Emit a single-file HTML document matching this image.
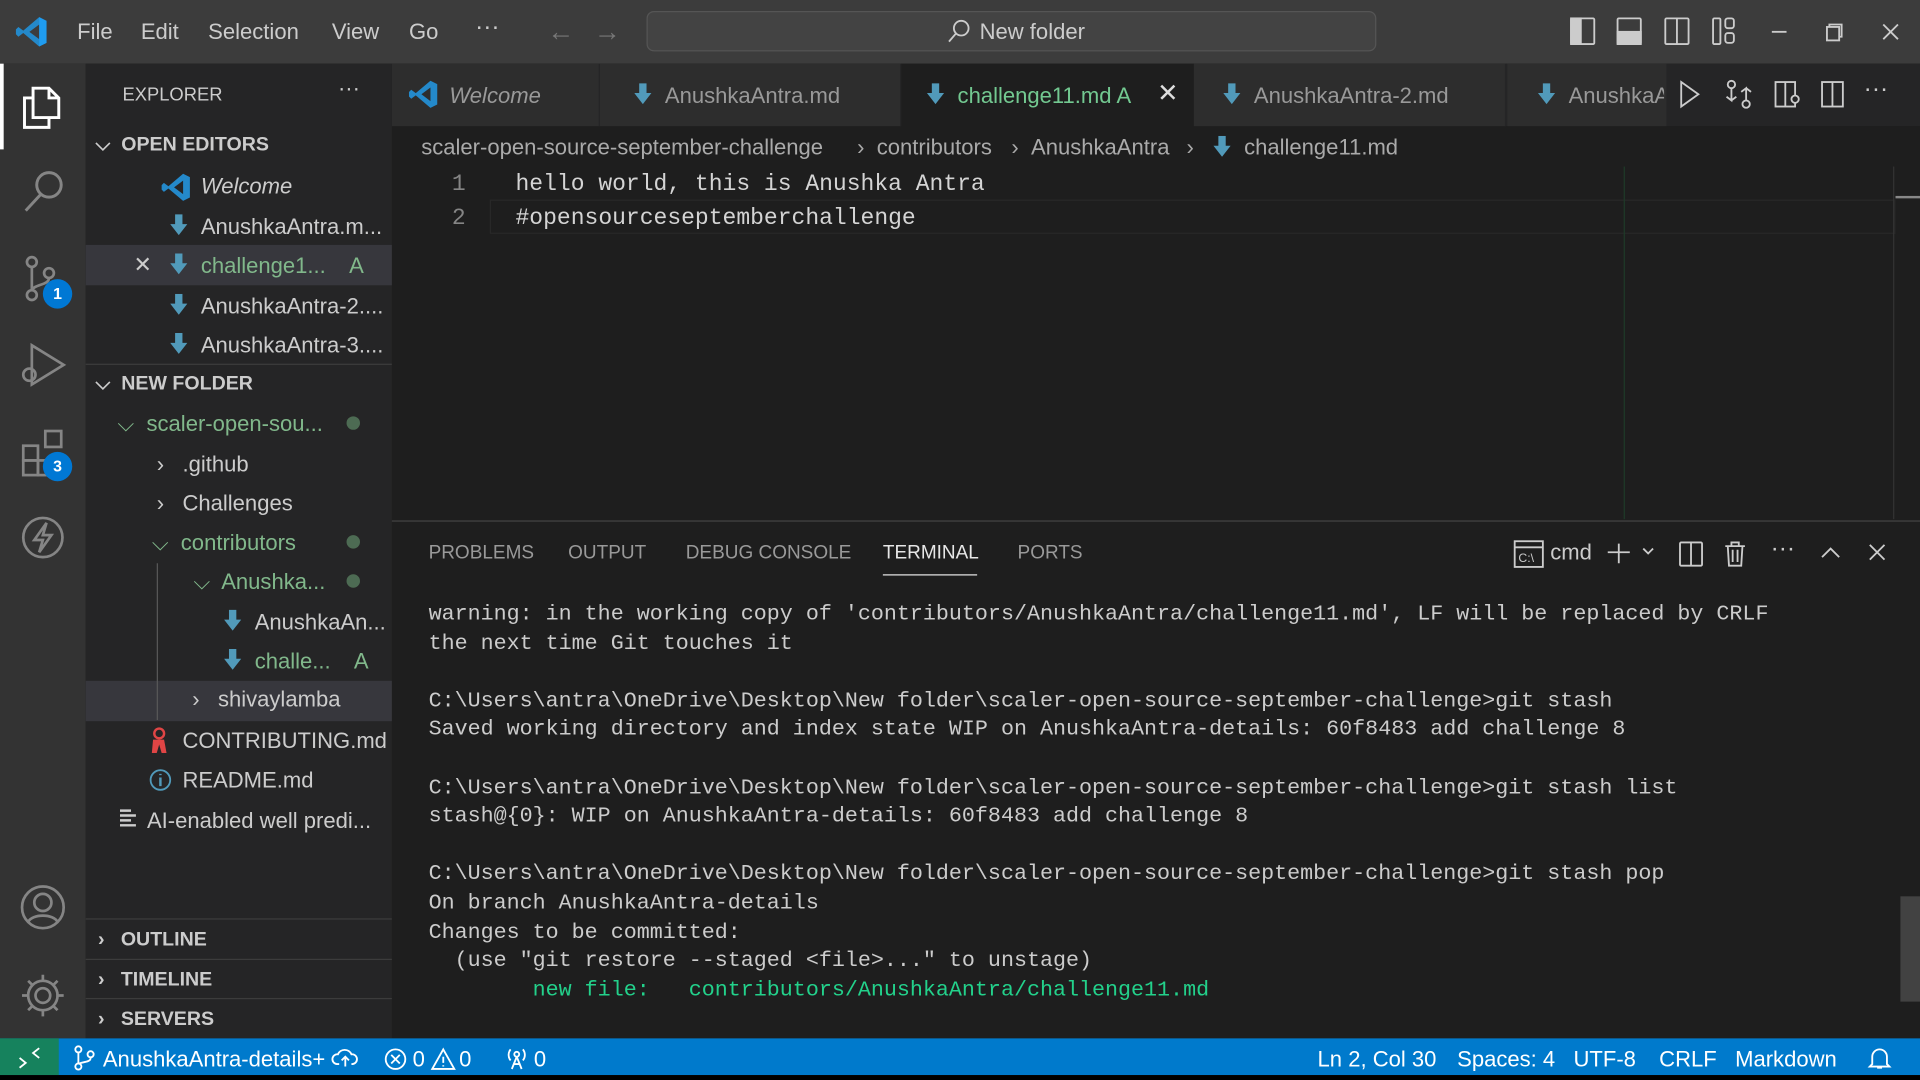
<!DOCTYPE html>
<html><head><meta charset="utf-8">
<style>
*{margin:0;padding:0;box-sizing:border-box}
html,body{width:1920px;height:1080px;overflow:hidden;background:#000}
#s{position:absolute;left:0;top:0;width:1568px;height:882px;transform:scale(1.22449);transform-origin:0 0;background:#1e1e1e;font-family:"Liberation Sans",sans-serif;color:#ccc;font-size:18px}
.a{position:absolute;white-space:nowrap}
.mono{font-family:"Liberation Mono",monospace}
.g{color:#81b88b}
.dot{position:absolute;width:11px;height:11px;border-radius:50%;background:#4d6b53}
svg{overflow:visible}
</style></head><body><div id="s">
<div class="a" style="left:0;top:0;width:1568px;height:52px;background:#3c3c3c"></div>
<svg class="a" style="left:13px;top:13px" width="26" height="26" viewBox="0 0 26 26"><path d="M19 1 L25 4 V22 L19 25 L6 14 L2 17 L0 15 V11 L2 9 L6 12 Z" fill="#2489ca"/><path d="M19 7 V19 L11 13 Z" fill="#3c3c3c"/><path d="M19 1 L25 4 V22 L19 25Z" fill="#1f9cf0"/></svg>
<div class="a" style="left:63px;top:16px">File</div>
<div class="a" style="left:115px;top:16px">Edit</div>
<div class="a" style="left:170px;top:16px">Selection</div>
<div class="a" style="left:271px;top:16px">View</div>
<div class="a" style="left:334px;top:16px">Go</div>
<div class="a" style="left:388px;top:11px;font-size:20px">···</div>
<div class="a" style="left:447px;top:13px;color:#777;font-size:22px">←</div>
<div class="a" style="left:485px;top:13px;color:#777;font-size:22px">→</div>
<div class="a" style="left:528px;top:9px;width:596px;height:33px;border:1px solid #555;border-radius:6px;background:#434343"></div>
<svg class="a" style="left:773px;top:16px" width="20" height="20"><circle cx="12" cy="7" r="6" stroke="#ccc" stroke-width="1.5" fill="none"/><path d="M8 11 L2 18" stroke="#ccc" stroke-width="1.5"/></svg>
<div class="a" style="left:800px;top:16px">New folder</div>
<svg class="a" style="left:1282px;top:14px" width="280" height="24" fill="none" stroke="#ccc" stroke-width="1.5">
<rect x="1" y="1" width="19" height="21" rx="1"/><rect x="1" y="1" width="8" height="21" fill="#ccc"/>
<rect x="39" y="1" width="19" height="21" rx="1"/><rect x="39" y="12" width="19" height="10" fill="#ccc"/>
<rect x="78" y="1" width="19" height="21" rx="1"/><path d="M87.5 1V22"/>
<rect x="117" y="1" width="6" height="21" rx="1"/><rect x="127" y="1" width="7" height="8" rx="2"/><rect x="127" y="13" width="7" height="8" rx="2"/>
<path d="M165 12H177"/><rect x="210" y="8" width="10" height="11"/><path d="M212 8V6H222V16H220"/><path d="M256 6L268 18M268 6L256 18"/></svg>
<div class="a" style="left:0;top:52px;width:70px;height:796px;background:#333"></div>
<div class="a" style="left:0;top:52px;width:3px;height:70px;background:#fff"></div>
<svg class="a" style="left:18px;top:68px" width="36" height="40" fill="none" stroke="#fff" stroke-width="2.4"><path d="M9 4H22L30 12V28H9Z"/><path d="M22 4V12H30"/><path d="M9 12H2V36H22V28"/></svg>
<svg class="a" style="left:18px;top:138px" width="36" height="36" fill="none" stroke="#858585" stroke-width="2.4"><circle cx="22" cy="13" r="10"/><path d="M15 21L3 34"/></svg>
<svg class="a" style="left:20px;top:208px" width="40" height="40" fill="none" stroke="#858585" stroke-width="2.2"><circle cx="6" cy="6" r="4"/><circle cx="6" cy="33" r="4"/><circle cx="20" cy="15" r="4"/><path d="M6 10V29M20 19C20 25 8 24 6 29"/></svg>
<div class="a" style="left:35px;top:228px;width:24px;height:24px;border-radius:50%;background:#0078d4;color:#fff;font-size:13px;font-weight:bold;text-align:center;line-height:24px">1</div>
<svg class="a" style="left:16px;top:278px" width="40" height="40" fill="none" stroke="#858585" stroke-width="2.2"><path d="M10 4L36 20L10 36Z"/><circle cx="8" cy="28" r="5"/></svg>
<svg class="a" style="left:17px;top:350px" width="40" height="40" fill="none" stroke="#858585" stroke-width="2.2"><rect x="2" y="14" width="12" height="12"/><rect x="2" y="26" width="12" height="12"/><rect x="14" y="26" width="12" height="12"/><rect x="20" y="2" width="13" height="13"/></svg>
<div class="a" style="left:35px;top:369px;width:24px;height:24px;border-radius:50%;background:#0078d4;color:#fff;font-size:13px;font-weight:bold;text-align:center;line-height:24px">3</div>
<svg class="a" style="left:17px;top:421px" width="36" height="36" fill="none" stroke="#858585" stroke-width="2.2"><circle cx="18" cy="18" r="16"/><path d="M21 6L11 20H18L15 30L25 16H18Z"/></svg>
<svg class="a" style="left:16px;top:722px" width="38" height="38" fill="none" stroke="#858585" stroke-width="2.2"><circle cx="19" cy="19" r="17"/><circle cx="19" cy="15" r="7"/><path d="M7 31C10 24 28 24 31 31"/></svg>
<svg class="a" style="left:16px;top:794px" width="38" height="38" fill="none" stroke="#858585" stroke-width="2.2"><circle cx="19" cy="19" r="6"/><path d="M19 2V8M19 30V36M2 19H8M30 19H36M7 7L11 11M27 27L31 31M7 31L11 27M27 11L31 7"/><circle cx="19" cy="19" r="12"/></svg>
<div class="a" style="left:70px;top:52px;width:250px;height:796px;background:#252526"></div>
<div class="a" style="left:100px;top:69px;font-size:15px">EXPLORER</div>
<div class="a" style="left:276px;top:62px;font-size:18px">···</div>
<div class="a" style="left:78px;top:110px;font-size:16px;font-weight:bold">⌵&nbsp; OPEN EDITORS</div>
<div class="a" style="left:70px;top:200px;width:250px;height:33px;background:#37373d"></div>
<svg class="a" style="left:132px;top:141px" width="24" height="24" viewBox="0 0 26 26"><path d="M19 1 L25 4 V22 L19 25 L6 14 L2 17 L0 15 V11 L2 9 L6 12 Z" fill="#2489ca"/><path d="M19 7 V19 L11 13 Z" fill="#252526"/></svg>
<div class="a" style="left:164px;top:142px;font-style:italic">Welcome</div>
<svg width="0" height="0" style="position:absolute"><defs><symbol id="dl" viewBox="0 0 14 18"><path d="M4 0H10V8H14L7 17L0 8H4Z" fill="#519aba"/></symbol></defs></svg>
<svg class="a" style="left:139px;top:175px" width="14" height="18"><use href="#dl"/></svg>
<div class="a" style="left:164px;top:175px">AnushkaAntra.m...</div>
<div class="a" style="left:109px;top:206px;font-size:18px">✕</div>
<svg class="a" style="left:139px;top:207px" width="14" height="18"><use href="#dl"/></svg>
<div class="a g" style="left:164px;top:207px">challenge1...&nbsp;&nbsp;&nbsp; A</div>
<svg class="a" style="left:139px;top:240px" width="14" height="18"><use href="#dl"/></svg>
<div class="a" style="left:164px;top:240px">AnushkaAntra-2....</div>
<svg class="a" style="left:139px;top:272px" width="14" height="18"><use href="#dl"/></svg>
<div class="a" style="left:164px;top:272px">AnushkaAntra-3....</div>
<div class="a" style="left:70px;top:297px;width:250px;height:1px;background:#3c3c3c"></div>
<div class="a" style="left:78px;top:305px;font-size:16px;font-weight:bold">⌵&nbsp; NEW FOLDER</div>
<div class="a g" style="left:96px;top:336px">⌵&nbsp; scaler-open-sou...</div><div class="dot" style="left:283px;top:340px"></div>
<div class="a" style="left:128px;top:369px">›&nbsp;&nbsp; .github</div>
<div class="a" style="left:128px;top:401px">›&nbsp;&nbsp; Challenges</div>
<div class="a g" style="left:124px;top:433px">⌵&nbsp; contributors</div><div class="dot" style="left:283px;top:437px"></div>
<div class="a" style="left:70px;top:556px;width:250px;height:33px;background:#37373d"></div>
<div class="a" style="left:158px;top:465px"><span class="g">⌵&nbsp; Anushka...</span></div><div class="dot" style="left:283px;top:469px"></div>
<div class="a" style="left:157px;top:561px">›&nbsp;&nbsp; shivaylamba</div>
<div class="a" style="left:128px;top:460px;width:1px;height:128px;background:#585858"></div>
<svg class="a" style="left:183px;top:498px" width="14" height="18"><use href="#dl"/></svg>
<div class="a" style="left:208px;top:498px">AnushkaAn...</div>
<svg class="a" style="left:183px;top:530px" width="14" height="18"><use href="#dl"/></svg>
<div class="a g" style="left:208px;top:530px">challe...&nbsp;&nbsp;&nbsp; A</div>
<svg class="a" style="left:122px;top:594px" width="16" height="22"><circle cx="8" cy="5" r="4" stroke="#e04545" stroke-width="2" fill="none"/><path d="M3 10H12L14 21H10L8 14L6 21H2Z" fill="#e04545"/></svg>
<div class="a" style="left:149px;top:595px">CONTRIBUTING.md</div>
<svg class="a" style="left:121px;top:627px" width="20" height="20"><circle cx="10" cy="10" r="8" stroke="#519aba" stroke-width="1.5" fill="none"/><path d="M10 8V15M10 5V6" stroke="#519aba" stroke-width="2"/></svg>
<div class="a" style="left:149px;top:627px">README.md</div>
<svg class="a" style="left:97px;top:660px" width="16" height="16" stroke="#ccc" stroke-width="2"><path d="M1 2H10M1 6H14M1 10H10M1 14H14"/></svg>
<div class="a" style="left:120px;top:660px">AI-enabled well predi...</div>
<div class="a" style="left:70px;top:750px;width:250px;height:1px;background:#3c3c3c"></div>
<div class="a" style="left:80px;top:759px;font-size:16px;font-weight:bold">›&nbsp;&nbsp; OUTLINE</div>
<div class="a" style="left:70px;top:783px;width:250px;height:1px;background:#3c3c3c"></div>
<div class="a" style="left:80px;top:792px;font-size:16px;font-weight:bold">›&nbsp;&nbsp; TIMELINE</div>
<div class="a" style="left:70px;top:815px;width:250px;height:1px;background:#3c3c3c"></div>
<div class="a" style="left:80px;top:824px;font-size:16px;font-weight:bold">›&nbsp;&nbsp; SERVERS</div>
<div class="a" style="left:320px;top:52px;width:1248px;height:51px;background:#252526"></div>
<div class="a" style="left:320px;top:52px;width:170px;height:51px;background:#2d2d2d;border-right:1px solid #252526"></div>
<svg class="a" style="left:334px;top:65px" width="24" height="24" viewBox="0 0 26 26"><path d="M19 1 L25 4 V22 L19 25 L6 14 L2 17 L0 15 V11 L2 9 L6 12 Z" fill="#2489ca"/><path d="M19 7 V19 L11 13 Z" fill="#2d2d2d"/></svg>
<div class="a" style="left:367px;top:68px;font-style:italic;color:#999">Welcome</div>
<div class="a" style="left:490px;top:52px;width:246px;height:51px;background:#2d2d2d;border-right:1px solid #252526"></div>
<svg class="a" style="left:518px;top:68px" width="14" height="18"><use href="#dl"/></svg>
<div class="a" style="left:543px;top:68px;color:#999">AnushkaAntra.md</div>
<div class="a" style="left:736px;top:52px;width:239px;height:51px;background:#1e1e1e"></div>
<svg class="a" style="left:757px;top:68px" width="14" height="18"><use href="#dl"/></svg>
<div class="a" style="left:782px;top:68px;color:#73c991">challenge11.md A</div>
<div class="a" style="left:945px;top:64px;font-size:21px;color:#ddd">✕</div>
<div class="a" style="left:975px;top:52px;width:255px;height:51px;background:#2d2d2d;border-right:1px solid #252526"></div>
<svg class="a" style="left:999px;top:68px" width="14" height="18"><use href="#dl"/></svg>
<div class="a" style="left:1024px;top:68px;color:#999">AnushkaAntra-2.md</div>
<div class="a" style="left:1231px;top:52px;width:130px;height:51px;background:#2d2d2d"></div>
<svg class="a" style="left:1256px;top:68px" width="14" height="18"><use href="#dl"/></svg>
<div class="a" style="left:1281px;top:68px;color:#999;width:78px;overflow:hidden">AnushkaAntra-3</div>
<svg class="a" style="left:1370px;top:64px" width="190" height="26" fill="none" stroke="#ccc" stroke-width="1.5">
<path d="M3 3L17 13L3 23Z"/><circle cx="44" cy="5" r="3"/><circle cx="56" cy="21" r="3"/><path d="M44 8V18L40 15M44 18L48 15M56 18V8L52 11M56 8L60 11"/>
<rect x="80" y="3" width="16" height="20"/><path d="M88 3V23"/><circle cx="96" cy="17" r="3" fill="#252526"/>
<rect x="118" y="3" width="17" height="20"/><path d="M126.5 3V23"/></svg>
<div class="a" style="left:1522px;top:62px;font-size:20px">···</div>
<div class="a" style="left:344px;top:110px;color:#aaa">scaler-open-source-september-challenge</div>
<div class="a" style="left:700px;top:110px;color:#aaa">›</div>
<div class="a" style="left:716px;top:110px;color:#aaa">contributors</div>
<div class="a" style="left:826px;top:110px;color:#aaa">›</div>
<div class="a" style="left:842px;top:110px;color:#aaa">AnushkaAntra</div>
<div class="a" style="left:969px;top:110px;color:#aaa">›</div>
<svg class="a" style="left:991px;top:111px" width="14" height="18"><use href="#dl"/></svg>
<div class="a" style="left:1016px;top:110px;color:#aaa">challenge11.md</div>
<div class="a" style="left:400px;top:163px;width:1148px;height:28px;border:1px solid #282828"></div>
<div class="a mono" style="left:369px;top:136px;font-size:18.8px;color:#858585;line-height:28px">1<br>2</div>
<div class="a mono" style="left:421px;top:136px;font-size:18.8px;color:#d4d4d4;line-height:28px">hello world, this is Anushka Antra<br>#opensourceseptemberchallenge</div>
<div class="a" style="left:1326px;top:136px;width:1px;height:288px;background:#1e3a28"></div>
<div class="a" style="left:1546px;top:136px;width:1px;height:288px;background:#333"></div>
<div class="a" style="left:1548px;top:160px;width:20px;height:2px;background:#888"></div>
<div class="a" style="left:320px;top:425px;width:1248px;height:1px;background:#444"></div>
<div class="a" style="left:350px;top:443px;font-size:15.5px;color:#999">PROBLEMS</div>
<div class="a" style="left:464px;top:443px;font-size:15.5px;color:#999">OUTPUT</div>
<div class="a" style="left:560px;top:443px;font-size:15.5px;color:#999">DEBUG CONSOLE</div>
<div class="a" style="left:721px;top:443px;font-size:15.5px;color:#e7e7e7">TERMINAL</div>
<div class="a" style="left:721px;top:469px;width:77px;height:1px;background:#e7e7e7"></div>
<div class="a" style="left:831px;top:443px;font-size:15.5px;color:#999">PORTS</div>
<svg class="a" style="left:1236px;top:440px" width="320" height="24" fill="none" stroke="#ccc" stroke-width="1.5">
<rect x="1" y="2" width="23" height="21"/><path d="M1 7H24"/><text x="4" y="19" fill="#ccc" stroke="none" font-size="10" font-family="Liberation Sans">C:\</text>
<path d="M86 4V20M77 11H95"/><path d="M106 8L110 12L114 8"/>
<rect x="136" y="3" width="18" height="19" rx="1"/><path d="M145 3V22"/>
<path d="M173 6H189M178 6V3H184V6M175 6L176 22H186L187 6M179 9V19M183 9V19"/>
<path d="M252 15L259 8L266 15"/><path d="M291 5L303 17M303 5L291 17"/></svg>
<div class="a" style="left:1266px;top:441px;font-size:18px">cmd</div>
<div class="a" style="left:1446px;top:437px;font-size:20px">···</div>
<div class="a mono" style="left:350px;top:491px;font-size:17.72px;line-height:23.6px;color:#ccc;white-space:pre">warning: in the working copy of 'contributors/AnushkaAntra/challenge11.md', LF will be replaced by CRLF
the next time Git touches it

C:\Users\antra\OneDrive\Desktop\New folder\scaler-open-source-september-challenge>git stash
Saved working directory and index state WIP on AnushkaAntra-details: 60f8483 add challenge 8

C:\Users\antra\OneDrive\Desktop\New folder\scaler-open-source-september-challenge>git stash list
stash@{0}: WIP on AnushkaAntra-details: 60f8483 add challenge 8

C:\Users\antra\OneDrive\Desktop\New folder\scaler-open-source-september-challenge>git stash pop
On branch AnushkaAntra-details
Changes to be committed:
  (use "git restore --staged &lt;file&gt;..." to unstage)
<span style="color:#23d18b">        new file:   contributors/AnushkaAntra/challenge11.md</span></div>
<div class="a" style="left:1552px;top:732px;width:16px;height:86px;background:#424242"></div>
<div class="a" style="left:0;top:848px;width:1568px;height:30px;background:#007acc"></div>
<div class="a" style="left:0;top:848px;width:48px;height:30px;background:#16825d"></div>
<svg class="a" style="left:15px;top:855px" width="18" height="16" fill="none" stroke="#fff" stroke-width="1.5"><path d="M1 9L6 13L1 17M17 1L12 5L17 9"/></svg>
<div class="a" style="left:0;top:878px;width:1568px;height:4px;background:#000"></div>
<svg class="a" style="left:60px;top:854px" width="18" height="20" fill="none" stroke="#fff" stroke-width="1.5"><circle cx="4" cy="3" r="2.5"/><circle cx="4" cy="17" r="2.5"/><circle cx="14" cy="7" r="2.5"/><path d="M4 6V14M14 10C14 14 6 13 4 15"/></svg>
<div class="a" style="left:84px;top:855px;color:#fff">AnushkaAntra-details+</div>
<svg class="a" style="left:271px;top:855px" width="22" height="18" fill="none" stroke="#fff" stroke-width="1.5"><path d="M6 14H4A4 4 0 0 1 5 6A6 6 0 0 1 16 6A4 4 0 0 1 17 14H16M11 16V8M8 11L11 8L14 11"/></svg>
<svg class="a" style="left:313px;top:855px" width="80" height="20" fill="none" stroke="#fff" stroke-width="1.5"><circle cx="10" cy="10" r="8"/><path d="M6.5 6.5L13.5 13.5M13.5 6.5L6.5 13.5"/><path d="M49 2L58 18H40Z M49 8V13M49 15V16"/></svg>
<div class="a" style="left:337px;top:855px;color:#fff">0</div>
<div class="a" style="left:375px;top:855px;color:#fff">0</div>
<svg class="a" style="left:412px;top:854px" width="20" height="20" fill="none" stroke="#fff" stroke-width="1.5"><circle cx="10" cy="7" r="2"/><path d="M10 9L6 19M10 9L14 19M7 15H13M5 3A7 7 0 0 0 5 12M15 3A7 7 0 0 1 15 12"/></svg>
<div class="a" style="left:436px;top:855px;color:#fff">0</div>
<div class="a" style="left:1076px;top:855px;color:#fff">Ln 2, Col 30</div>
<div class="a" style="left:1190px;top:855px;color:#fff">Spaces: 4</div>
<div class="a" style="left:1285px;top:855px;color:#fff">UTF-8</div>
<div class="a" style="left:1355px;top:855px;color:#fff">CRLF</div>
<div class="a" style="left:1417px;top:855px;color:#fff">Markdown</div>
<svg class="a" style="left:1526px;top:854px" width="18" height="20" fill="none" stroke="#fff" stroke-width="1.5"><path d="M3 15V9A6 6 0 0 1 15 9V15L17 17H1Z M7 18H11"/></svg>
</div></body></html>
